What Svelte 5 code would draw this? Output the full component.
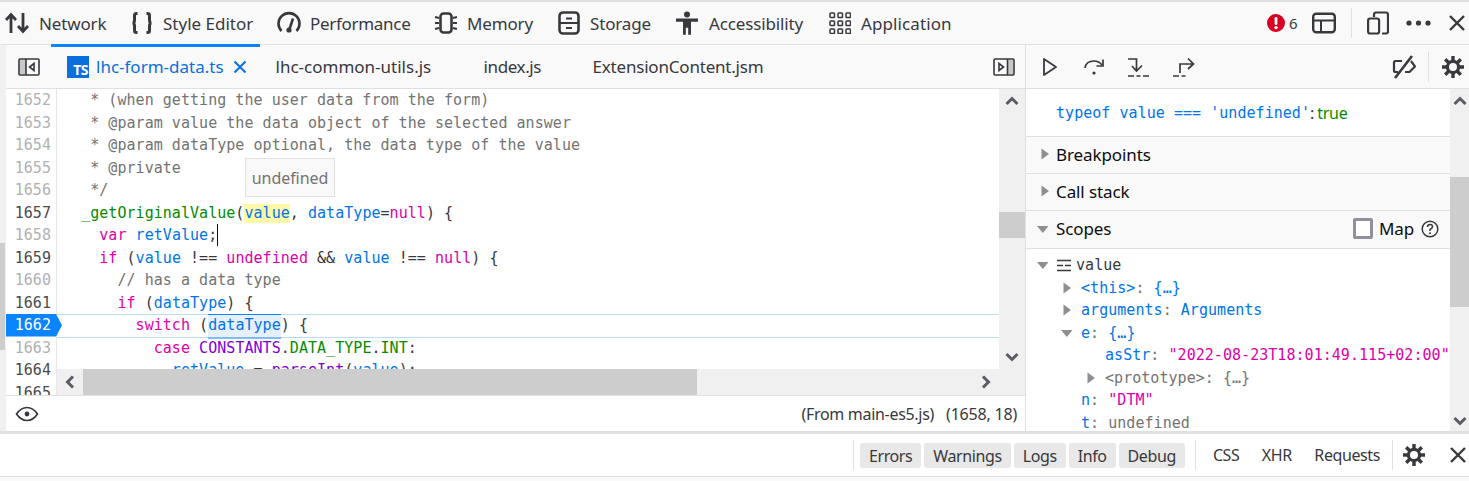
<script>
  const devTabs = [
    { id: "network", label: "Network" },
    { id: "style", label: "Style Editor" },
    { id: "perf", label: "Performance" },
    { id: "memory", label: "Memory" },
    { id: "storage", label: "Storage" },
    { id: "a11y", label: "Accessibility" },
    { id: "app", label: "Application" },
  ];

  const sources = [
    { name: "lhc-form-data.ts", active: true },
    { name: "lhc-common-utils.js", cls: "w1" },
    { name: "index.js", cls: "w2" },
    { name: "ExtensionContent.jsm", cls: "w3" },
  ];

  // c comment, k keyword, v variable, f function, p constant, d plain
  const lines = [
    { n: 1652, t: [["c", "   * (when getting the user data from the form)"]] },
    { n: 1653, t: [["c", "   * @param value the data object of the selected answer"]] },
    { n: 1654, t: [["c", "   * @param dataType optional, the data type of the value"]] },
    { n: 1655, t: [["c", "   * @private"]] },
    { n: 1656, t: [["c", "   */"]] },
    { n: 1657, on: true, t: [["d", "  "], ["f", "_getOriginalValue"], ["d", "("], ["v hit", "value"], ["d", ", "], ["v", "dataType"], ["d", "="], ["k", "null"], ["d", ") {"]] },
    { n: 1658, caret: true, t: [["d", "    "], ["k", "var"], ["d", " "], ["v", "retValue"], ["d", ";"]] },
    { n: 1659, on: true, t: [["d", "    "], ["k", "if"], ["d", " ("], ["v", "value"], ["d", " !== "], ["k", "undefined"], ["d", " && "], ["v", "value"], ["d", " !== "], ["k", "null"], ["d", ") {"]] },
    { n: 1660, t: [["c", "      // has a data type"]] },
    { n: 1661, on: true, t: [["d", "      "], ["k", "if"], ["d", " ("], ["v", "dataType"], ["d", ") {"]] },
    { n: 1662, on: true, current: true, t: [["d", "        "], ["k", "switch"], ["d", " ("], ["v paused", "dataType"], ["d", ") {"]] },
    { n: 1663, t: [["d", "          "], ["k", "case"], ["d", " "], ["p", "CONSTANTS"], ["d", "."], ["f", "DATA_TYPE"], ["d", "."], ["f", "INT"], ["d", ":"]] },
    { n: 1664, on: true, t: [["d", "            "], ["v", "retValue"], ["d", " = "], ["p", "parseInt"], ["d", "("], ["v", "value"], ["d", ");"]] },
    { n: 1665, on: true, t: [["d", "            "], ["k", "break"], ["d", ";"]] },
  ];

  const filters = ["Errors", "Warnings", "Logs", "Info", "Debug"];
  const netFilters = ["CSS", "XHR", "Requests"];
</script>

{#snippet tri(open)}
  <svg class="tri" width="12" height="12" viewBox="0 0 12 12">
    {#if open}
      <path d="M0 3h11.500L5.800 10z" />
    {:else}
      <path d="M2.500 .5l7.500 5.500-7.500 5.500z" />
    {/if}
  </svg>
{/snippet}

{#snippet gear()}
  <svg width="24" height="24" viewBox="0 0 24 24" fill="none" stroke="#38383d">
    <circle cx="12" cy="12" r="5.600" stroke-width="3.200" />
    <path stroke-width="3.400" d="M12 1v5M12 18v5M1 12h5M18 12h5M4.200 4.200l3.500 3.500M16.300 16.300l3.500 3.500M19.800 4.200l-3.500 3.500M7.700 16.300l-3.500 3.500" />
  </svg>
{/snippet}

{#snippet cross()}
  <svg width="18" height="18" viewBox="0 0 18 18" fill="none" stroke="#38383d" stroke-width="2.400">
    <path d="M2 2l14 14M16 2L2 16" />
  </svg>
{/snippet}

{#snippet chev(dir)}
  <svg class="chev {dir}" width="14" height="10" viewBox="0 0 14 10" fill="none" stroke="#5b5b66" stroke-width="3">
    <path d="M1.500 8L7 2.500 12.500 8" />
  </svg>
{/snippet}

<div class="page">
  <header class="devbar">
    <span class="tabline"></span>
    <nav class="devtabs">
      {#each devTabs as tab (tab.id)}
        <span class="devtab {tab.id}">
          {#if tab.id === "network"}
            <svg width="24" height="24" viewBox="0 0 24 24" fill="none" stroke="#38383d" stroke-width="2.800">
              <path d="M6 22V4M1 9l5-5.500L11 9M18 2v18M13 15l5 5.500 5-5.500" />
            </svg>
          {:else if tab.id === "style"}
            <svg width="22" height="24" viewBox="0 0 22 24" fill="none" stroke="#38383d" stroke-width="3">
              <path d="M6.500 2.500H5.500Q3.500 2.500 3.500 4.500V9Q3.500 12 1.500 12 3.500 12 3.500 15V19.500Q3.500 21.500 5.500 21.500H6.500M15.500 2.500H16.500Q18.500 2.500 18.500 4.500V9Q18.500 12 20.500 12 18.500 12 18.500 15V19.500Q18.500 21.500 16.500 21.500H15.500" />
            </svg>
          {:else if tab.id === "perf"}
            <svg width="24" height="24" viewBox="0 0 24 24" fill="none" stroke="#38383d" stroke-width="2.600">
              <path d="M4.500 20A10.500 10.500 0 1 1 19.500 20" />
              <path d="M16 7.500L12.500 18" />
              <circle cx="12" cy="19" r="2.600" fill="#38383d" stroke="none" />
            </svg>
          {:else if tab.id === "memory"}
            <svg width="24" height="24" viewBox="0 0 24 24" fill="none" stroke="#38383d" stroke-width="2.200">
              <rect x="6.500" y="2.500" width="11" height="19" rx="3" stroke-width="2.600" />
              <path d="M1 6l4 1M1 12h4M1 18l4-1M19 7l4-1M19 12h4M19 17l4 1" />
            </svg>
          {:else if tab.id === "storage"}
            <svg width="22" height="24" viewBox="0 0 22 24" fill="none" stroke="#38383d" stroke-width="2.600">
              <rect x="1.500" y="1.500" width="19" height="21" rx="3.500" />
              <path d="M1.500 12h19M8 7.500h6M8 17h6" stroke-width="2" />
            </svg>
          {:else if tab.id === "a11y"}
            <svg width="22" height="24" viewBox="0 0 22 24" fill="#38383d">
              <circle cx="11" cy="3.500" r="3" />
              <path d="M0 7.500h22v3.200h-7v13h-2.800v-7h-2.400v7H7v-13H0z" />
            </svg>
          {:else}
            <svg width="22" height="22" viewBox="0 0 22 22" fill="none" stroke="#38383d" stroke-width="1.500">
              {#each [1, 9, 17] as y}
                {#each [1, 9, 17] as x}
                  <rect {x} {y} width="4.500" height="4.500" rx=".8" />
                {/each}
              {/each}
            </svg>
          {/if}
          <span>{tab.label}</span>
        </span>
      {/each}
    </nav>
    <div class="devtools-right">
      <svg class="err" width="18" height="18" viewBox="0 0 18 18">
        <circle cx="9" cy="9" r="9" fill="#d70022" />
        <rect x="7.600" y="3" width="2.800" height="8" rx="1.200" fill="#fff" />
        <circle cx="9" cy="13.600" r="1.700" fill="#fff" />
      </svg>
      <span class="errcount">6</span>
      <svg class="ic-layout" width="24" height="22" viewBox="0 0 24 22" fill="none" stroke="#38383d" stroke-width="2.400">
        <rect x="1.200" y="1.800" width="21.600" height="18.400" rx="3" />
        <path d="M1.200 8.500h21.600M9 8.500v11.700" stroke-width="2" />
      </svg>
      <span class="sep"></span>
      <svg class="ic-phone" width="22" height="24" viewBox="0 0 22 24" fill="none" stroke="#38383d" stroke-width="2.200">
        <path d="M7 6V3.500Q7 1.500 9 1.500h10Q21 1.500 21 3.500v17Q21 22.500 19 22.500h-4" />
        <rect x="1.100" y="7.500" width="11" height="15" rx="2" />
      </svg>
      <svg class="ic-dots" width="25" height="6" viewBox="0 0 25 6" fill="#38383d">
        <circle cx="3" cy="3" r="2.600" /><circle cx="12.500" cy="3" r="2.600" /><circle cx="22" cy="3" r="2.600" />
      </svg>
      {@render cross()}
    </div>
  </header>

  <main class="debugger">
    <div class="strip"><span class="strip-thumb"></span></div>

    <section class="editor">
      <div class="srcbar">
        <svg class="pane-btn" width="22" height="20" viewBox="0 0 22 20" fill="none" stroke="#38383d" stroke-width="1.600">
          <rect x="1" y="2" width="20" height="16" rx="1" />
          <rect x="2" y="3" width="6" height="14" fill="#c8c8c8" stroke="none" />
          <path d="M8 2v16" />
          <path d="M16 6.500v7L11.500 10z" />
        </svg>
        {#each sources as src (src.name)}
          {#if src.active}
            <span class="src active">
              <span class="ts">TS</span>
              <span>{src.name}</span>
              <svg class="src-x" width="14" height="14" viewBox="0 0 14 14" fill="none" stroke="#0a6fdc" stroke-width="2">
                <path d="M1.500 1.500l11 11M12.500 1.500l-11 11" />
              </svg>
            </span>
          {:else}
            <span class="src {src.cls}">{src.name}</span>
          {/if}
        {/each}
        <svg class="pane-btn2" width="22" height="20" viewBox="0 0 22 20" fill="none" stroke="#38383d" stroke-width="1.600">
          <rect x="1" y="2" width="20" height="16" rx="1" />
          <rect x="15" y="3" width="5" height="14" fill="#c8c8c8" stroke="none" />
          <path d="M14.500 2v16" />
          <path d="M6 6.500v7L10.500 10z" />
        </svg>
      </div>

      <div class="editor-body">
        <div class="gutter">
          {#each lines as line (line.n)}
            <div class="num" class:on={line.on} class:current={line.current}>{line.n}</div>
          {/each}
        </div>
        <div class="code-col">
          <div class="code-row">
            <div class="code">
              {#each lines as line (line.n)}
                <div class="line" class:current={line.current}>{#each line.t as tok}<span class={tok[0]}>{tok[1]}</span>{/each}{#if line.caret}<span class="caret"></span>{/if}</div>
              {/each}
              <div class="tip">undefined</div>
            </div>
            <div class="vscroll">
              {@render chev("up")}
              <span class="vthumb"></span>
              <span class="grow"></span>
              {@render chev("down")}
            </div>
          </div>
          <div class="hscroll">
            {@render chev("left")}
            <span class="hthumb"></span>
            <span class="grow"></span>
            {@render chev("right")}
          </div>
        </div>
      </div>

      <div class="statusbar">
        <svg width="24" height="16" viewBox="0 0 24 16" fill="none" stroke="#38383d" stroke-width="1.700">
          <path d="M1.500 8Q6 1.500 12 1.500T22.500 8Q18 14.500 12 14.500T1.500 8z" />
          <circle cx="12" cy="8" r="2.400" fill="#38383d" stroke="none" />
        </svg>
        <span class="grow"></span>
        <span>(From main-es5.js)</span>
        <span class="pos">(1658, 18)</span>
      </div>
    </section>

    <aside class="side">
      <div class="sidebar-tools">
        <svg class="t-play" width="16" height="20" viewBox="0 0 16 20" fill="none" stroke="#38383d" stroke-width="1.800">
          <path d="M2 2l12 8-12 8z" stroke-linejoin="round" />
        </svg>
        <svg class="t-over" width="22" height="20" viewBox="0 0 22 20" fill="none" stroke="#38383d" stroke-width="1.700">
          <path d="M2 11Q3 4 11 4 16 4 19 8" />
          <path d="M20 2.500V9h-6.500" />
          <circle cx="11" cy="16" r="1.600" fill="#38383d" stroke="none" />
        </svg>
        <svg class="t-in" width="23" height="22" viewBox="0 0 23 22" fill="none" stroke="#38383d" stroke-width="1.700">
          <path d="M1 3h8.500v11M5 10l4.500 5L15 9.500" />
          <path d="M1 20h6M9.500 20h4M16 20h6" />
        </svg>
        <svg class="t-out" width="23" height="22" viewBox="0 0 23 22" fill="none" stroke="#38383d" stroke-width="1.700">
          <path d="M8 17V8h13M16 2.500L21.500 8 16 13" />
          <path d="M1 20h6M9.500 20h4" />
        </svg>
        <span class="grow"></span>
        <svg class="t-bp" width="24" height="24" viewBox="0 0 24 24" fill="none" stroke="#38383d" stroke-width="2.200">
          <path d="M10 6H3.500Q2 6 2 7.500v8Q2 17 3.500 17H6M13 17h4.500L23 11.500 19 6" />
          <path d="M3 23L20 1" stroke-width="2.600" />
        </svg>
        <span class="sep tools-sep"></span>
        {@render gear()}
      </div>

      <div class="side-body">
        <div class="side-main">
          <div class="expr">
            <span class="v">typeof value === 'undefined'</span><span class="colon">:</span><span class="true">true</span>
          </div>
          <div class="acc h1">{@render tri(false)}<span>Breakpoints</span></div>
          <div class="acc h1">{@render tri(false)}<span>Call stack</span></div>
          <div class="acc h2">
            {@render tri(true)}<span>Scopes</span>
            <span class="grow"></span>
            <span class="check"></span>
            <span>Map</span>
            <svg class="help" width="18" height="18" viewBox="0 0 18 18" fill="none" stroke="#38383d" stroke-width="1.500">
              <circle cx="9" cy="9" r="7.800" />
              <path d="M6.500 7Q6.500 4.600 9 4.600 11.500 4.600 11.500 6.800 11.500 8.300 9 9.500V11" />
              <circle cx="9" cy="13.300" r="1" fill="#38383d" stroke="none" />
            </svg>
          </div>

          <div class="tree">
            <div class="row d0">
              <span class="slot">{@render tri(true)}</span>
              <svg class="scope-ic" width="14" height="13" viewBox="0 0 14 13" stroke="#38383d" stroke-width="1.500">
                <path d="M0 1.500h14M0 6.500h6M8 6.500h6M0 11.500h14" />
              </svg>
              <span class="d">value</span>
            </div>
            <div class="row d1"><span class="slot">{@render tri(false)}</span><span class="v">&lt;this&gt;</span><span class="g">{": "}</span><span class="v">&#123;…&#125;</span></div>
            <div class="row d1"><span class="slot">{@render tri(false)}</span><span class="v">arguments</span><span class="g">{": "}</span><span class="v">Arguments</span></div>
            <div class="row d1"><span class="slot">{@render tri(true)}</span><span class="v">e</span><span class="g">{": "}</span><span class="v">&#123;…&#125;</span></div>
            <div class="row d2"><span class="slot"></span><span class="v">asStr</span><span class="g">{": "}</span><span class="k">"2022-08-23T18:01:49.115+02:00"</span></div>
            <div class="row d2"><span class="slot">{@render tri(false)}</span><span class="g">&lt;prototype&gt;: &#123;…&#125;</span></div>
            <div class="row d1"><span class="slot"></span><span class="v">n</span><span class="g">{": "}</span><span class="k">"DTM"</span></div>
            <div class="row d1"><span class="slot"></span><span class="v">t</span><span class="g">: undefined</span></div>
          </div>
        </div>
        <div class="side-scroll">
          {@render chev("up")}
          <span class="sthumb"></span>
          <span class="grow"></span>
          {@render chev("down")}
        </div>
      </div>
    </aside>
  </main>

  <footer class="console">
    <span class="sep c-sep1"></span>
    {#each filters as f (f)}
      <span class="filter">{f}</span>
    {/each}
    <span class="sep c-sep2"></span>
    {#each netFilters as f (f)}
      <span class="netf">{f}</span>
    {/each}
    <span class="sep c-sep3"></span>
    {@render gear()}
    <span class="c-x">{@render cross()}</span>
  </footer>
</div>

<style>
  :global(body) {
    margin: 0;
    background: #fff;
  }

  .page {
    width: 1469px;
    height: 481px;
    overflow: hidden;
    font-family: "Noto Sans", sans-serif;
    color: #0c0c0d;
    background: #f9f9fa;
    display: flex;
    flex-direction: column;
    border-top: 2px solid #e0e0e2;
    box-sizing: border-box;
  }

  .grow {
    flex: 1;
  }

  svg {
    flex: none;
    display: block;
  }

  .devbar {
    position: relative;
    height: 42px;
    flex: none;
    background: #f9f9fa;
    border-bottom: 1px solid #e0e0e2;
    display: flex;
    align-items: center;
    padding-left: 5px;
    font-size: 17px;
    color: #38383d;
  }

  .tabline {
    position: absolute;
    left: 51px;
    width: 209px;
    top: 42px;
    height: 3px;
    background: #0a84ff;
  }

  .devtabs {
    display: grid;
    grid-template-columns: 126px 146px 157px 124px 118px 153px auto;
  }

  .devtab {
    display: flex;
    align-items: center;
    gap: 10px;
    letter-spacing: -0.15px;
  }

  .devtab.style {
    letter-spacing: 0;
  }

  .devtab.perf {
    gap: 9px;
    letter-spacing: -0.3px;
  }

  .devtab.memory {
    gap: 9px;
  }

  .devtab.a11y {
    gap: 11px;
  }

  .devtab.app {
    letter-spacing: 0.1px;
  }

  .devtools-right {
    margin-left: auto;
    display: flex;
    align-items: center;
    padding-right: 3px;
  }

  .errcount {
    margin-left: 4px;
    font-size: 15px;
    width: 23px;
  }

  .sep {
    width: 1px;
    background: #e0e0e2;
    flex: none;
  }

  .devtools-right .sep {
    height: 30px;
    margin: 0 15px;
  }

  .ic-dots {
    margin: 0 17px;
  }

  .debugger {
    height: 386px;
    flex: none;
    display: flex;
    background: #fff;
  }

  .strip {
    width: 6px;
    flex: none;
    background: #f0f0f0;
    padding-top: 198px;
    box-sizing: border-box;
  }

  .strip-thumb {
    display: block;
    width: 5px;
    height: 107px;
    background: #cdcdcd;
  }

  .editor {
    width: 1019px;
    flex: none;
    display: flex;
    flex-direction: column;
    border-right: 1px solid #e0e0e2;
    box-sizing: content-box;
  }

  .srcbar {
    height: 43px;
    flex: none;
    background: #f9f9fa;
    border-bottom: 1px solid #e0e0e2;
    display: flex;
    align-items: center;
    font-size: 17px;
    color: #38383d;
    padding-left: 12px;
  }

  .pane-btn {
    margin-right: 27px;
  }

  .pane-btn2 {
    margin-left: auto;
    margin-right: 10px;
  }

  .src {
    display: flex;
    align-items: center;
    white-space: nowrap;
  }

  .src.active {
    color: #0a6fdc;
    gap: 7px;
  }

  .ts {
    width: 22px;
    height: 22px;
    background: #0b6fdb;
    color: #fff;
    font-size: 14px;
    font-weight: 700;
    letter-spacing: -0.5px;
    display: flex;
    align-items: flex-end;
    justify-content: flex-end;
    line-height: 16px;
    padding-right: 1px;
    box-sizing: border-box;
  }

  .src-x {
    margin-left: 2px;
  }

  .w1 {
    margin-left: 29px;
    width: 208px;
  }

  .w2 {
    width: 109px;
    letter-spacing: -0.4px;
  }

  .w3 {
    width: 170px;
    letter-spacing: -0.2px;
  }

  .editor-body {
    height: 306px;
    flex: none;
    display: flex;
    overflow: hidden;
  }

  .gutter,
  .code,
  .tree,
  .expr {
    font-family: "DejaVu Sans Mono", monospace;
    font-size: 15px;
    line-height: 22.5px;
    letter-spacing: 0.04px;
  }

  .gutter {
    width: 50px;
    flex: none;
    border-right: 1px solid #e8e8ea;
    color: #b1b1b3;
    position: relative;
    z-index: 1;
    overflow: visible;
  }

  .num {
    height: 22.5px;
    text-align: right;
    padding-right: 5px;
  }

  .num.on {
    color: #4a4a4f;
  }

  .num.current {
    width: 56px;
    box-sizing: border-box;
    padding-right: 11px;
    background: #0a84ff;
    color: #fff;
    clip-path: polygon(0 0, 50px 0, 56px 50%, 50px 100%, 0 100%);
  }

  .code-col {
    flex: 1;
    min-width: 0;
    display: flex;
    flex-direction: column;
  }

  .code-row {
    height: 280px;
    flex: none;
    display: flex;
    overflow: hidden;
  }

  .code {
    position: relative;
    flex: 1;
    min-width: 0;
    padding-left: 6px;
    white-space: pre;
    color: #38383d;
    overflow: hidden;
  }

  .line {
    height: 22.5px;
  }

  .line.current {
    margin: 0 0 -1.5px -6px;
    padding-left: 6px;
    height: 24px;
    line-height: 20.5px;
    box-sizing: border-box;
    border-top: 1px solid #bcdcf7;
    border-bottom: 1px solid #bcdcf7;
  }

  .c {
    color: #737373;
  }

  .k {
    color: #dd00a9;
  }

  .v {
    color: #0074e8;
  }

  .f {
    color: #058b00;
  }

  .p {
    color: #8000d7;
  }

  .g {
    color: #737373;
  }

  .hit {
    background: #fff9a8;
    display: inline-block;
    line-height: 19px;
  }

  .paused {
    background: #e6f0fa;
    display: inline-block;
    box-shadow: 0 -1px 0 #0a84ff, 0 1.5px 0 #e6f0fa, 0 2.5px 0 #0a84ff;
  }

  .caret {
    display: inline-block;
    width: 1px;
    height: 22px;
    background: #0c0c0d;
    vertical-align: top;
  }

  .tip {
    position: absolute;
    left: 188px;
    top: 69px;
    width: 90px;
    height: 39px;
    box-sizing: border-box;
    background: #f9f9fa;
    border: 1px solid #e0e0e2;
    font-family: "Noto Sans", sans-serif;
    font-size: 16px;
    line-height: 39px;
    letter-spacing: -0.05px;
    text-align: center;
    color: #737373;
  }

  .vscroll {
    width: 26px;
    flex: none;
    background: #f0f0f0;
    display: flex;
    flex-direction: column;
    align-items: center;
    padding: 7px 0;
    box-sizing: border-box;
  }

  .vthumb {
    width: 26px;
    height: 26px;
    margin-top: 106px;
    background: #cdcdcd;
  }

  .hscroll {
    height: 26px;
    flex: none;
    background: #f0f0f0;
    display: flex;
    align-items: center;
    padding-left: 6px;
    padding-right: 32px;
  }

  .hthumb {
    width: 614px;
    height: 26px;
    margin-left: 6px;
    background: #cdcdcd;
  }

  .chev.left {
    transform: rotate(-90deg);
  }

  .chev.right {
    transform: rotate(90deg);
  }

  .chev.down {
    transform: rotate(180deg);
  }

  .statusbar {
    flex: 1;
    border-top: 1px solid #e0e0e2;
    display: flex;
    align-items: center;
    padding: 0 8px 0 9px;
    font-size: 16px;
    color: #38383d;
    letter-spacing: -0.3px;
    white-space: nowrap;
  }

  .pos {
    margin-left: 12px;
    letter-spacing: -0.2px;
  }

  .side {
    flex: 1;
    min-width: 0;
    display: flex;
    flex-direction: column;
  }

  .sidebar-tools {
    height: 43px;
    flex: none;
    background: #f9f9fa;
    border-bottom: 1px solid #e0e0e2;
    display: flex;
    align-items: center;
    padding: 0 4px 0 16px;
  }

  .t-over {
    margin-left: 25px;
  }

  .t-in {
    margin-left: 22px;
  }

  .t-out {
    margin-left: 22px;
  }

  .tools-sep {
    height: 30px;
    margin: 0 12px 0 12px;
  }

  .side-body {
    flex: 1;
    min-height: 0;
    display: flex;
  }

  .side-main {
    flex: 1;
    min-width: 0;
    overflow: hidden;
    background: #fff;
  }

  .side-scroll {
    width: 19px;
    flex: none;
    background: #f0f0f0;
    display: flex;
    flex-direction: column;
    align-items: center;
    padding: 7px 0 5px;
    box-sizing: border-box;
  }

  .sthumb {
    width: 19px;
    height: 130px;
    margin-top: 71px;
    background: #cdcdcd;
  }

  .expr {
    height: 48px;
    box-sizing: border-box;
    border-bottom: 1px solid #e0e0e2;
    padding: 2px 0 0 30px;
    display: flex;
    align-items: center;
    white-space: pre;
  }

  .colon {
    color: #38383d;
    font-family: "Noto Sans", sans-serif;
    font-size: 16px;
    margin-right: 3px;
  }

  .true {
    color: #058b00;
    font-family: "Noto Sans", sans-serif;
    font-size: 16px;
    letter-spacing: -0.3px;
  }

  .acc {
    background: #f9f9fa;
    border-bottom: 1px solid #e0e0e2;
    display: flex;
    align-items: center;
    box-sizing: border-box;
    padding: 0 0 2px 13px;
    font-size: 17px;
    letter-spacing: -0.1px;
    gap: 5px;
  }

  .h1 {
    height: 37px;
  }

  .h2 {
    height: 38px;
    gap: 0;
    padding-left: 11px;
    padding-right: 11px;
  }

  .h2 > span:nth-of-type(1) {
    margin-left: 7px;
  }

  .tri {
    fill: #8e8e93;
  }

  .check {
    width: 20px;
    height: 21px;
    box-sizing: border-box;
    border: 3px solid #8f8f9d;
    border-radius: 2px;
    background: #fff;
    margin-right: 6px;
  }

  .help {
    margin-left: 7px;
  }

  .tree {
    padding-top: 5px;
    color: #38383d;
  }

  .row {
    height: 22.5px;
    display: flex;
    align-items: center;
  }

  .row > span {
    white-space: pre;
  }

  .row.d0 {
    padding-left: 6px;
  }

  .row.d1 {
    padding-left: 30px;
  }

  .row.d2 {
    padding-left: 54px;
  }

  .slot {
    width: 20px;
    margin-left: 5px;
    flex: none;
  }

  .scope-ic {
    margin-right: 5px;
  }

  .console {
    height: 42px;
    flex: none;
    background: #fff;
    border-top: 3px solid #e0e0e2;
    border-bottom: 1px solid #e0e0e2;
    box-sizing: content-box;
    display: flex;
    align-items: center;
    padding-left: 853px;
    font-size: 16px;
    color: #38383d;
    letter-spacing: -0.4px;
  }

  .console .sep {
    height: 30px;
  }

  .filter {
    height: 25px;
    line-height: 26px;
    padding: 0 9px;
    background: #e8e8e8;
    border-radius: 3px;
    margin-right: 3px;
  }

  .netf {
    line-height: 26px;
    margin-right: 22.5px;
  }

  .c-sep1 {
    margin-right: 6px;
  }

  .c-sep2 {
    margin: 0 17px 0 7px;
  }

  .c-sep3 {
    margin: 0 9px 0 -10px;
  }

  .c-x {
    margin-left: 23px;
  }
</style>
